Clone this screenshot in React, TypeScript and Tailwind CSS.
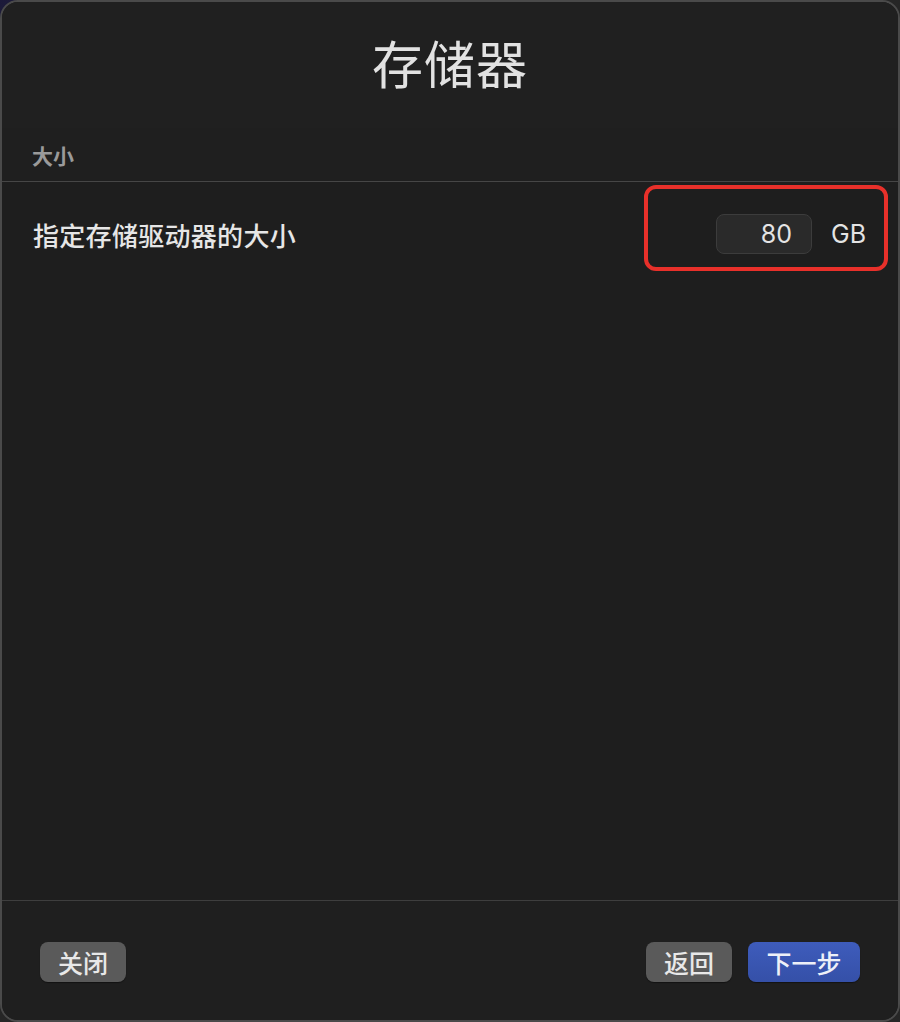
import React from "react";

export default function App() {
  const cjk = { fontFamily: '"Noto Sans CJK SC", "Noto Sans", sans-serif' };
  const latin = { fontFamily: 'Inter, "Noto Sans CJK SC", sans-serif' };
  return (
    <div className="w-[900px] h-[1022px] bg-[linear-gradient(135deg,#1c1a3a_0%,#222230_6%,#262626_30%)]" style={cjk}>
      <div className="w-full h-full rounded-[18px] border-2 border-[#4a4a4a] bg-[#1f1f1f] flex flex-col overflow-hidden">
        <div className="h-[126px] flex items-center justify-center bg-[#202020]">
          <h1 className="text-[51px] leading-none text-[#e2e2e2] tracking-[1px] -mt-[5px]">存储器</h1>
        </div>
        <div className="h-[53px] flex items-center pl-[30px]">
          <span className="text-[21px] font-bold text-[#9a9a9a] leading-none mt-[1px]">大小</span>
        </div>
        <div className="h-px bg-[#464646]" />
        <div className="flex-1 bg-[#1e1e1e]">
          <div className="relative h-[106px] flex items-center justify-between pl-[31px] pr-[32px]">
            <span className="text-[26px] font-medium text-[#e6e6e6] leading-none tracking-[0.3px]">指定存储驱动器的大小</span>
            <div className="flex items-center gap-[19px] -mt-[2px]">
              <div className="w-[96px] h-[40px] rounded-[8px] bg-[#2a2a2a] border border-[#3c3c3c] flex items-center justify-end pr-[19px]">
                <span className="text-[25px] text-[#e4e4e4] leading-none" style={latin}>80</span>
              </div>
              <span className="text-[25px] text-[#e4e4e4] leading-none" style={latin}>GB</span>
            </div>
            <div className="absolute left-[642px] top-[3px] w-[244px] h-[86px] rounded-[12px] border-4 border-[#e8302a] pointer-events-none" />
          </div>
        </div>
        <div className="h-px bg-[#3e3e3e]" />
        <div className="h-[119px] bg-[#1f1f1f] flex items-start justify-between pt-[41px] pl-[38px] pr-[38px]">
          <button className="w-[86px] h-[40px] rounded-[8px] bg-[#5a5a5a] text-[25px] font-medium text-[#e8e8e8] leading-none flex items-center justify-center shadow-[0_1px_1px_rgba(0,0,0,0.4)]">关闭</button>
          <div className="flex gap-[16px]">
            <button className="w-[86px] h-[40px] rounded-[8px] bg-[#5a5a5a] text-[25px] font-medium text-[#e8e8e8] leading-none flex items-center justify-center shadow-[0_1px_1px_rgba(0,0,0,0.4)]">返回</button>
            <button className="w-[112px] h-[40px] rounded-[8px] bg-[linear-gradient(180deg,#3e5cbc,#3550a8)] text-[25px] font-medium text-[#eef0f8] leading-none flex items-center justify-center shadow-[0_1px_1px_rgba(0,0,0,0.4)]">下一步</button>
          </div>
        </div>
      </div>
    </div>
  );
}
